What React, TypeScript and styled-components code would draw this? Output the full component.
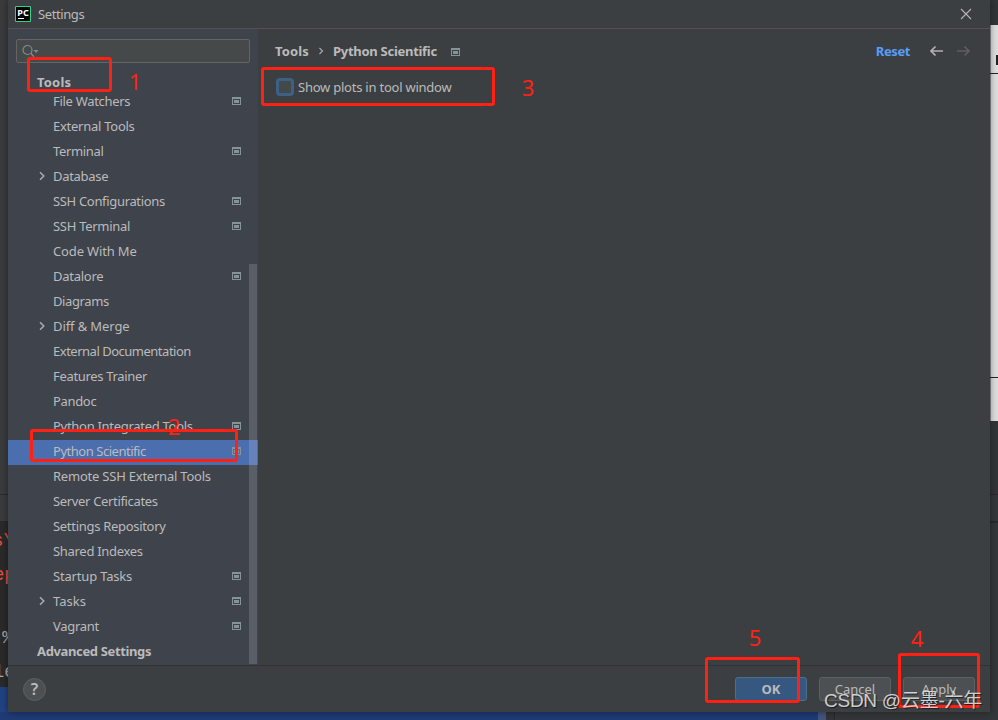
import React from 'react';
import styled, { createGlobalStyle } from 'styled-components';

const GlobalStyle = createGlobalStyle`
  * { box-sizing: border-box; }
  html, body { margin: 0; background: #333537; overflow: hidden; }
  body { font-family: "Noto Sans", "Open Sans", sans-serif; font-size: 13px; color: #bbb; }
`;

const Screen = styled.div`
  position: relative;
  width: 998px;
  height: 720px;
  display: grid;
  grid-template-columns: 8px 982px 8px;
  grid-template-rows: 712px 8px;
  overflow: hidden;
`;

const Strip = styled.div`
  display: flex;
  flex-direction: column;
  overflow: hidden;
`;

const Band = styled.div<{ $h: number; $c: string; $edge?: boolean }>`
  flex: none;
  height: ${p => p.$h}px;
  background: ${p => p.$c};
  border-left: ${p => (p.$edge ? '1px solid #8c8c8c' : 'none')};
`;

const GlyphBand = styled(Band)`
  display: flex;
  justify-content: flex-end;
  align-items: center;
`;

const GlyphEdge = styled.span`
  width: 2px;
  height: 10px;
  background: #222;
`;

const Code = styled.div`
  flex: none;
  height: 166px;
  background: #2a2a2a;
  overflow: hidden;
  display: flex;
  flex-direction: column;
  align-items: flex-end;
  padding-top: 3px;
`;

const CodeLine = styled.div<{ $c: string; $gap?: number; $shift?: number }>`
  font: 18px/34px "Liberation Mono", monospace;
  white-space: nowrap;
  color: ${p => p.$c};
  margin-top: ${p => p.$gap || 0}px;
  margin-right: ${p => p.$shift || 0}px;
`;

const BottomEdge = styled.div`
  grid-column: 1 / -1;
  display: grid;
  grid-template-columns: 818px 8px 8px 1px 1fr;
`;

const Fill = styled.div<{ $c: string }>`
  background: ${p => p.$c};
`;

const Dialog = styled.div`
  display: flex;
  flex-direction: column;
  background: #3c3f41;
  box-shadow: 0 0 7px rgba(0, 0, 0, 0.45);
  z-index: 1;
`;

const TitleBar = styled.div`
  height: 29px;
  flex: none;
  display: flex;
  align-items: center;
  padding: 0 18px 0 7px;
  border-bottom: 1px solid #515151;
`;

const Title = styled.span`
  margin-left: 7px;
  flex: 1;
  letter-spacing: -0.4px;
`;

const Main = styled.div`
  height: 636px;
  flex: none;
  display: grid;
  grid-template-columns: 250px 1fr;
`;

const Sidebar = styled.div`
  position: relative;
  background: #3f434c;
  padding-top: 10px;
  overflow: hidden;
`;

const Search = styled.div`
  width: 234px;
  height: 24px;
  margin-left: 8px;
  border: 1px solid #646464;
  border-radius: 2px;
  background: #45494a;
  padding: 4px 0 0 5px;
`;

const GroupLabel = styled.div`
  height: 27px;
  padding: 5px 0 0 29px;
  font-weight: 700;
  line-height: 28px;
  letter-spacing: 0.2px;
`;

const Row = styled.div<{ $selected?: boolean; $heading?: boolean }>`
  height: 25px;
  display: flex;
  align-items: center;
  padding: 0 17px 3px 29px;
  font-weight: ${p => (p.$heading ? 700 : 400)};
  background: ${p => (p.$selected ? '#4b6eaf' : 'transparent')};
`;

const Caret = styled.span`
  width: 16px;
  height: 10px;
  display: flex;
  padding-left: 1px;
`;

const Label = styled.span<{ $track?: number }>`
  flex: 1;
  line-height: 18px;
  white-space: nowrap;
  letter-spacing: ${p => p.$track || 0}px;
`;

const ScrollThumb = styled.div`
  position: absolute;
  left: 241px;
  top: 235px;
  width: 8px;
  height: 400px;
  background: rgba(255, 255, 255, 0.145);
`;

const Content = styled.div`
  padding: 11px 19px 0 17px;
`;

const Crumbs = styled.div`
  display: flex;
  align-items: center;
  height: 22px;
  font-weight: 700;
`;

const Crumb = styled.span<{ $track: number }>`
  letter-spacing: ${p => p.$track}px;
`;

const CrumbArrow = styled.span`
  width: 24px;
  display: flex;
  justify-content: center;
`;

const CrumbIcon = styled.span`
  display: flex;
  flex: 1;
  padding: 1px 0 0 14px;
`;

const Reset = styled.span`
  color: #589df6;
  margin-right: 19px;
  letter-spacing: -0.4px;
`;

const Arrows = styled.span`
  display: flex;
  gap: 12px;
`;

const Option = styled.label`
  display: flex;
  align-items: center;
  height: 20px;
  margin: 15px 0 0 1px;
`;

const CheckBox = styled.span`
  width: 18px;
  height: 18px;
  border: 3px solid #3d6185;
  border-radius: 4px;
  background: #43494a;
  margin-right: 4px;
`;

const Footer = styled.div`
  flex: 1;
  display: flex;
  align-items: center;
  border-top: 1px solid #323232;
  padding: 0 15px;
  gap: 12px;
`;

const Help = styled.div`
  width: 23px;
  height: 23px;
  border-radius: 50%;
  border: 1px solid #5e6060;
  background: #4c5052;
  display: flex;
  align-items: center;
  justify-content: center;
  font-size: 16px;
  font-weight: 600;
  margin-right: auto;
`;

const Button = styled.div<{ $primary?: boolean }>`
  width: 72px;
  height: 24px;
  border-radius: 3px;
  border: 1px solid ${p => (p.$primary ? '#4c708c' : '#5e6060')};
  background: ${p => (p.$primary ? '#365880' : '#4c5052')};
  font-weight: ${p => (p.$primary ? 700 : 400)};
  display: flex;
  align-items: center;
  justify-content: center;
`;

const Mark = styled.div<{ $x: number; $y: number; $w: number; $h: number }>`
  position: absolute;
  z-index: 2;
  left: ${p => p.$x}px;
  top: ${p => p.$y}px;
  width: ${p => p.$w}px;
  height: ${p => p.$h}px;
  border: 3px solid #ff2113;
  border-radius: 3px;
`;

const MarkNumber = styled.div<{ $x: number; $y: number }>`
  position: absolute;
  z-index: 2;
  left: ${p => p.$x}px;
  top: ${p => p.$y}px;
  width: 20px;
  text-align: center;
  font: 22px/24px "Noto Sans", sans-serif;
  color: #ff2113;
`;

const Watermark = styled.div`
  position: absolute;
  z-index: 3;
  left: 824px;
  top: 688px;
  font: 19px/26px "Liberation Sans", "Noto Sans CJK SC", sans-serif;
  letter-spacing: -0.25px;
  white-space: nowrap;
  color: rgba(235, 235, 235, 0.85);
  text-shadow: 1px 1px 1px rgba(0, 0, 0, 0.6);
`;

const ProjectIcon = () => (
  <svg width="9" height="8" viewBox="0 0 9 8" shapeRendering="crispEdges">
    <path fill="#87939a" fillRule="evenodd" d="M0 0h9v8H0zM1 2v5h7V2z" />
    <path fill="#87939a" d="M2 3h5v3H2z" />
  </svg>
);

const Chevron = () => (
  <svg width="8" height="10" viewBox="0 0 8 10">
    <path d="M2 1.2 5.8 5 2 8.8" fill="none" stroke="#adadad" strokeWidth="1.5" />
  </svg>
);

const AppIcon = () => (
  <svg width="16" height="16" viewBox="0 0 16 16">
    <path fill="#000" stroke="#21d789" d="M.5.5h15v15H.5z" />
    <text x="2.3" y="9.5" fill="#fff" fontFamily="Noto Sans" fontSize="9" fontWeight="700" textLength="11.4" lengthAdjust="spacingAndGlyphs">PC</text>
    <path fill="#fff" d="M3 12h6v1H3z" />
  </svg>
);

const Arrow = ({ back }: { back?: boolean }) => (
  <svg width="15" height="12" viewBox="0 0 15 12">
    <path
      d={back ? 'M14 6H2M6.5 1.5 2 6l4.5 4.5' : 'M1 6h12M8.5 1.5 13 6l-4.5 4.5'}
      fill="none"
      stroke={back ? '#afb1b3' : '#5c5e60'}
      strokeWidth="1.7"
    />
  </svg>
);

type Item = { name: string; icon?: boolean; caret?: boolean; selected?: boolean; track?: number };

const items: Item[] = [
  { name: 'File Watchers', icon: true, track: -0.3 },
  { name: 'External Tools', track: -0.26 },
  { name: 'Terminal', icon: true, track: -0.35 },
  { name: 'Database', caret: true, track: -0.3 },
  { name: 'SSH Configurations', icon: true, track: -0.33 },
  { name: 'SSH Terminal', icon: true, track: -0.28 },
  { name: 'Code With Me', track: -0.15 },
  { name: 'Datalore', icon: true, track: -0.25 },
  { name: 'Diagrams', track: -0.38 },
  { name: 'Diff & Merge', caret: true, track: -0.1 },
  { name: 'External Documentation', track: -0.49 },
  { name: 'Features Trainer', track: -0.32 },
  { name: 'Pandoc', track: -0.33 },
  { name: 'Python Integrated Tools', icon: true, track: -0.29 },
  { name: 'Python Scientific', icon: true, selected: true, track: -0.47 },
  { name: 'Remote SSH External Tools', track: -0.22 },
  { name: 'Server Certificates', track: -0.34 },
  { name: 'Settings Repository', track: -0.3 },
  { name: 'Shared Indexes', track: -0.3 },
  { name: 'Startup Tasks', icon: true, track: -0.18 },
  { name: 'Tasks', icon: true, caret: true },
  { name: 'Vagrant', icon: true, track: -0.28 },
];

const marks = [
  [27, 57, 85, 35],
  [261, 67, 234, 39],
  [30, 429, 208, 33],
  [705, 657, 95, 46],
  [898, 653, 82, 55],
];

const numbers: [string, number, number][] = [
  ['1', 125, 69],
  ['2', 164, 414],
  ['3', 518, 75],
  ['4', 907, 626],
  ['5', 745, 625],
];

export default function App() {
  return (
    <>
      <GlobalStyle />
      <Screen>
        <Strip>
          <Band $h={494} $c="#393b3d" />
          <Band $h={1} $c="#2b2b2b" />
          <Band $h={26} $c="#393b3d" />
          <Code>
            <CodeLine $c="#e8503f" $shift={-6}>s\</CodeLine>
            <CodeLine $c="#e8503f" $shift={-7}>ep</CodeLine>
            <CodeLine $c="#a9a9a9" $gap={29} $shift={-5}>%</CodeLine>
            <CodeLine $c="#a9a9a9" $shift={-7}>le</CodeLine>
          </Code>
          <Band $h={25} $c="#214283" />
        </Strip>

        <Dialog>
          <TitleBar>
            <AppIcon />
            <Title>Settings</Title>
            <svg width="12" height="12" viewBox="0 0 12 12">
              <path d="m1 1 10 10M11 1 1 11" stroke="#b4b6b7" strokeWidth="1.1" />
            </svg>
          </TitleBar>

          <Main>
            <Sidebar>
              <Search>
                <svg width="18" height="14" viewBox="0 0 18 14">
                  <circle cx="5.5" cy="6" r="4.5" fill="none" stroke="#7f8b91" strokeWidth="1.2" />
                  <path d="m8.7 9.2 3.3 3.6" stroke="#7f8b91" strokeWidth="1.4" />
                  <path d="M11.5 6h5L14 9z" fill="#7f8b91" />
                </svg>
              </Search>
              <GroupLabel>Tools</GroupLabel>
              {items.map(it => (
                <Row key={it.name} $selected={it.selected}>
                  <Caret>{it.caret && <Chevron />}</Caret>
                  <Label $track={it.track}>{it.name}</Label>
                  {it.icon && <ProjectIcon />}
                </Row>
              ))}
              <Row $heading>
                <Label $track={-0.36}>Advanced Settings</Label>
              </Row>
              <ScrollThumb />
            </Sidebar>

            <Content>
              <Crumbs>
                <Crumb $track={0.15}>Tools</Crumb>
                <CrumbArrow>
                  <svg width="6" height="8" viewBox="0 0 6 8">
                    <path d="M1.5 1 4.5 4l-3 3" fill="none" stroke="#adadad" strokeWidth="1.1" />
                  </svg>
                </CrumbArrow>
                <Crumb $track={-0.28}>Python Scientific</Crumb>
                <CrumbIcon><ProjectIcon /></CrumbIcon>
                <Reset>Reset</Reset>
                <Arrows><Arrow back /><Arrow /></Arrows>
              </Crumbs>
              <Option>
                <CheckBox />
                <Label $track={-0.23}>Show plots in tool window</Label>
              </Option>
            </Content>
          </Main>

          <Footer>
            <Help>?</Help>
            <Button $primary>OK</Button>
            <Button>Cancel</Button>
            <Button>Apply</Button>
          </Footer>
        </Dialog>

        <Strip>
          <Band $h={25} $c="#323537" />
          <Band $h={30} $c="#dedede" $edge />
          <GlyphBand $h={10} $c="#dedede" $edge><GlyphEdge /></GlyphBand>
          <Band $h={8} $c="#dedede" $edge />
          <Band $h={1} $c="#222" />
          <Band $h={303} $c="#dedede" $edge />
          <Band $h={1} $c="#222" />
          <Band $h={43} $c="#dedede" $edge />
          <Band $h={73} $c="#323537" />
          <Band $h={1} $c="#292929" />
          <Band $h={26} $c="#343739" />
          <Band $h={2} $c="#292929" />
          <Band $h={189} $c="#343739" />
        </Strip>

        <BottomEdge>
          <Fill $c="#1f3b75" />
          <Fill $c="#42547f" />
          <Fill $c="#313335" />
          <Fill $c="#292929" />
          <Fill $c="#343739" />
        </BottomEdge>

        {marks.map(([x, y, w, h]) => (
          <Mark key={x} $x={x} $y={y} $w={w} $h={h} />
        ))}
        {numbers.map(([n, x, y]) => (
          <MarkNumber key={n} $x={x} $y={y}>{n}</MarkNumber>
        ))}
        <Watermark>CSDN @云墨-六年</Watermark>
      </Screen>
    </>
  );
}
